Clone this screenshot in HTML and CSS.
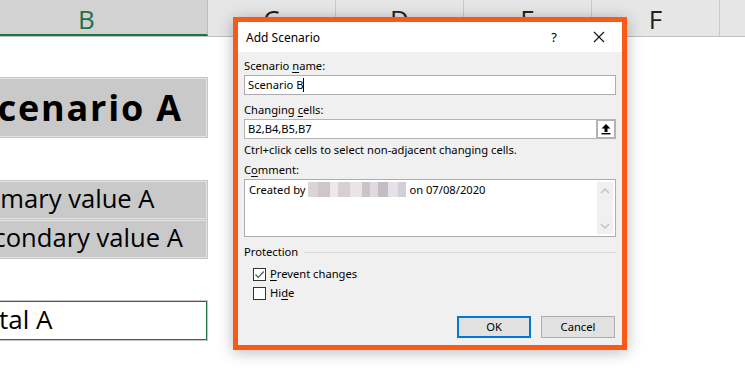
FILE: index.html
```html
<!DOCTYPE html>
<html>
<head>
<meta charset="utf-8">
<link rel="stylesheet" href="styles.css">
</head>
<body>
<div class="sheet">
  <div class="colhead">
    <div class="hc sel">B</div>
    <div class="hc">C</div>
    <div class="hc">D</div>
    <div class="hc">E</div>
    <div class="hc">F</div>
    <div class="hc">G</div>
  </div>
  <div class="grid">
    <div class="cell big">Scenario A</div>
    <div class="cell val v1">Primary value A</div>
    <div class="cell val v2">Secondary value A</div>
    <div class="cell tot">Total A</div>
  </div>

  <div class="dialog">
    <div class="titlebar">
      <span class="title">Add Scenario</span>
      <span class="help">?</span>
      <svg class="close" width="12" height="12" viewBox="0 0 12 12"><path d="M1 1 L11 11 M11 1 L1 11" stroke="#111" stroke-width="1.1" fill="none"/></svg>
    </div>
    <div class="body">
      <div class="lbl l1">Scenario <u>n</u>ame:</div>
      <div class="field">Scenario B<span class="caret"></span></div>
      <div class="lbl l2">Changing <u>c</u>ells:</div>
      <div class="field ref">
        <span class="reftext">B2,B4,B5,B7</span>
        <span class="collapse">
          <svg width="12" height="12" viewBox="0 0 12 12"><path d="M6 1 L10.5 5.5 H7.5 V9 H4.5 V5.5 H1.5 Z" fill="#000"/><rect x="1.5" y="10" width="9" height="1.4" fill="#000"/></svg>
        </span>
      </div>
      <div class="hint">Ctrl+click cells to select non-adjacent changing cells.</div>
      <div class="lbl l3">C<u>o</u>mment:</div>
      <div class="memo">
        <div class="memotext">Created by <span class="blur"></span> on 07/08/2020</div>
        <div class="vscroll">
          <svg width="10" height="6" viewBox="0 0 10 6"><path d="M1 5 L5 1 L9 5" stroke="#c2c2c2" stroke-width="1.5" fill="none"/></svg>
          <svg width="10" height="6" viewBox="0 0 10 6"><path d="M1 1 L5 5 L9 1" stroke="#c2c2c2" stroke-width="1.5" fill="none"/></svg>
        </div>
      </div>
      <div class="group"><span>Protection</span><span class="rule"></span></div>
      <div class="check c1">
        <span class="box">
          <svg width="11" height="11" viewBox="0 0 11 11"><path d="M1.5 5.5 L4.3 8.3 L9.8 2.5" stroke="#555" stroke-width="1.2" fill="none"/></svg>
        </span>
        <span><u>P</u>revent changes</span>
      </div>
      <div class="check c2">
        <span class="box"></span>
        <span>Hi<u>d</u>e</span>
      </div>
      <div class="buttons">
        <div class="btn ok">OK</div>
        <div class="btn">Cancel</div>
      </div>
    </div>
  </div>
</div>
</body>
</html>
```
FILE: styles.css
```css
html, body {
  margin: 0;
  padding: 0;
  background: #ffffff;
}
body {
  width: 745px;
  height: 374px;
  overflow: hidden;
}
.sheet {
  position: relative;
  width: 745px;
  height: 374px;
  overflow: hidden;
  font-family: "Open Sans", "Noto Sans", sans-serif;
}
.colhead {
  display: flex;
  height: 36px;
  border-bottom: 1px solid #bfbfbf;
  background: #e6e6e6;
}
.hc {
  box-sizing: border-box;
  flex: 0 0 128px;
  height: 36px;
  padding-top: 4px;
  border-right: 1px solid #c9c9c9;
  font-size: 26px;
  line-height: 30px;
  text-align: center;
  color: #222;
  background: #e6e6e6;
}
.hc.sel {
  flex: 0 0 242px;
  margin-left: -34px;
  background: #d2d2d2;
  color: #217346;
  border-bottom: 2px solid #217346;
  border-right: 1px solid #bcbcbc;
}
.grid {
  display: flex;
  flex-direction: column;
  align-items: flex-start;
  margin-top: -1px;
}
.cell {
  box-sizing: border-box;
  width: 260px;
  margin-left: -52px;
  border: 1px solid #c6c6c6;
  background: #c9c9c9;
  color: #000;
  white-space: nowrap;
  overflow: hidden;
  box-shadow: inset 0 0 0 1px #e4e4e4;
}
.big {
  margin-top: 41px;
  height: 61px;
  font-size: 36px;
  font-weight: 700;
  letter-spacing: 1.8px;
  line-height: 60px;
  text-indent: 27px;
}
.val {
  height: 40px;
  font-size: 25.6px;
  line-height: 36px;
}
.v1 {
  margin-top: 42px;
  text-indent: 19px;
}
.v2 {
  margin-top: -1px;
  text-indent: 16px;
}
.tot {
  margin-top: 41px;
  height: 41px;
  background: #ffffff;
  font-size: 26px;
  line-height: 36px;
  text-indent: 20px;
  box-shadow: inset 0 0 0 1px #217346;
}
.dialog {
  position: absolute;
  left: 233px;
  top: 17px;
  width: 384px;
  height: 323px;
  border: 5px solid #f95b16;
  background: #f0f0f0;
  box-shadow: 0 2px 14px rgba(0, 0, 0, 0.28);
  font-family: "Noto Sans", "Open Sans", sans-serif;
  font-size: 11.2px;
  color: #000;
}
.titlebar {
  height: 30px;
  background: #ffffff;
  display: flex;
  align-items: center;
  padding: 0 17px 0 8px;
}
.title {
  flex: 1;
  font-size: 12px;
}
.help {
  font-size: 13px;
  margin-right: 36px;
}
.close {
  display: block;
}
.body {
  padding: 6px 6px 0 6px;
}
.lbl, .hint {
  height: 16px;
  line-height: 16px;
}
.l1 { margin-bottom: 1px; }
.l2 { margin-top: 7px; margin-bottom: 1px; }
.hint { margin-top: 3px; }
.l3 { margin-top: 4px; margin-bottom: 1px; }
u {
  text-decoration: underline;
  text-underline-offset: 2px;
}
.field {
  box-sizing: border-box;
  height: 20px;
  border: 1px solid #adadad;
  background: #fff;
  line-height: 18px;
  padding-left: 3px;
  display: flex;
  align-items: center;
}
.caret {
  display: inline-block;
  width: 1px;
  height: 14px;
  background: #000;
}
.ref {
  border-color: #b4b4b4;
}
.reftext {
  flex: 1;
}
.collapse {
  box-sizing: border-box;
  width: 20px;
  height: 20px;
  margin: -1px -1px -1px 0;
  border: 2px solid #b4b4b4;
  background: #fff;
  display: flex;
  align-items: center;
  justify-content: center;
}
.collapse svg {
  display: block;
}
.memo {
  box-sizing: border-box;
  height: 58px;
  border: 1px solid #adadad;
  background: #fff;
  display: flex;
  padding: 2px;
}
.memotext {
  flex: 1;
  padding-left: 2px;
  line-height: 15px;
  display: flex;
  align-items: flex-start;
  white-space: pre;
}
.blur {
  display: inline-block;
  width: 98px;
  height: 15px;
  background:
    linear-gradient(90deg,
      #dcd3d6 0 10px, #cfc6cb 10px 22px, #ebe9ec 22px 30px, #d6cfd3 30px 42px,
      #e7e5e8 42px 54px, #cbc3c8 54px 62px, #dedbe0 62px 70px, #c4bec4 70px 80px,
      #e4e2e6 80px 90px, #d2d0d6 90px 98px);
}
.vscroll {
  width: 16px;
  background: #f0f0f0;
  display: flex;
  flex-direction: column;
  justify-content: space-between;
  align-items: center;
  padding: 6px 0 5px 0;
}
.vscroll svg { display: block; }
.group {
  margin-top: 7px;
  height: 16px;
  line-height: 16px;
  display: flex;
  align-items: center;
}
.rule {
  flex: 1;
  height: 1px;
  background: #dcdcdc;
  margin-left: 6px;
}
.check {
  height: 16px;
  line-height: 16px;
  display: flex;
  align-items: center;
  padding-left: 9px;
}
.c1 { margin-top: 6px; }
.c2 { margin-top: 3px; }
.box {
  box-sizing: border-box;
  width: 13px;
  height: 13px;
  border: 1px solid #333;
  background: #fff;
  margin-right: 4px;
  display: flex;
  align-items: center;
  justify-content: center;
}
.box svg { display: block; }
.buttons {
  margin-top: 15px;
  display: flex;
  justify-content: flex-end;
  gap: 10px;
  padding-right: 1px;
}
.btn {
  box-sizing: border-box;
  width: 74px;
  height: 22px;
  border: 1px solid #adadad;
  background: #e1e1e1;
  text-align: center;
  line-height: 20px;
}
.btn.ok {
  border: 2px solid #0078d7;
  line-height: 18px;
}
```
